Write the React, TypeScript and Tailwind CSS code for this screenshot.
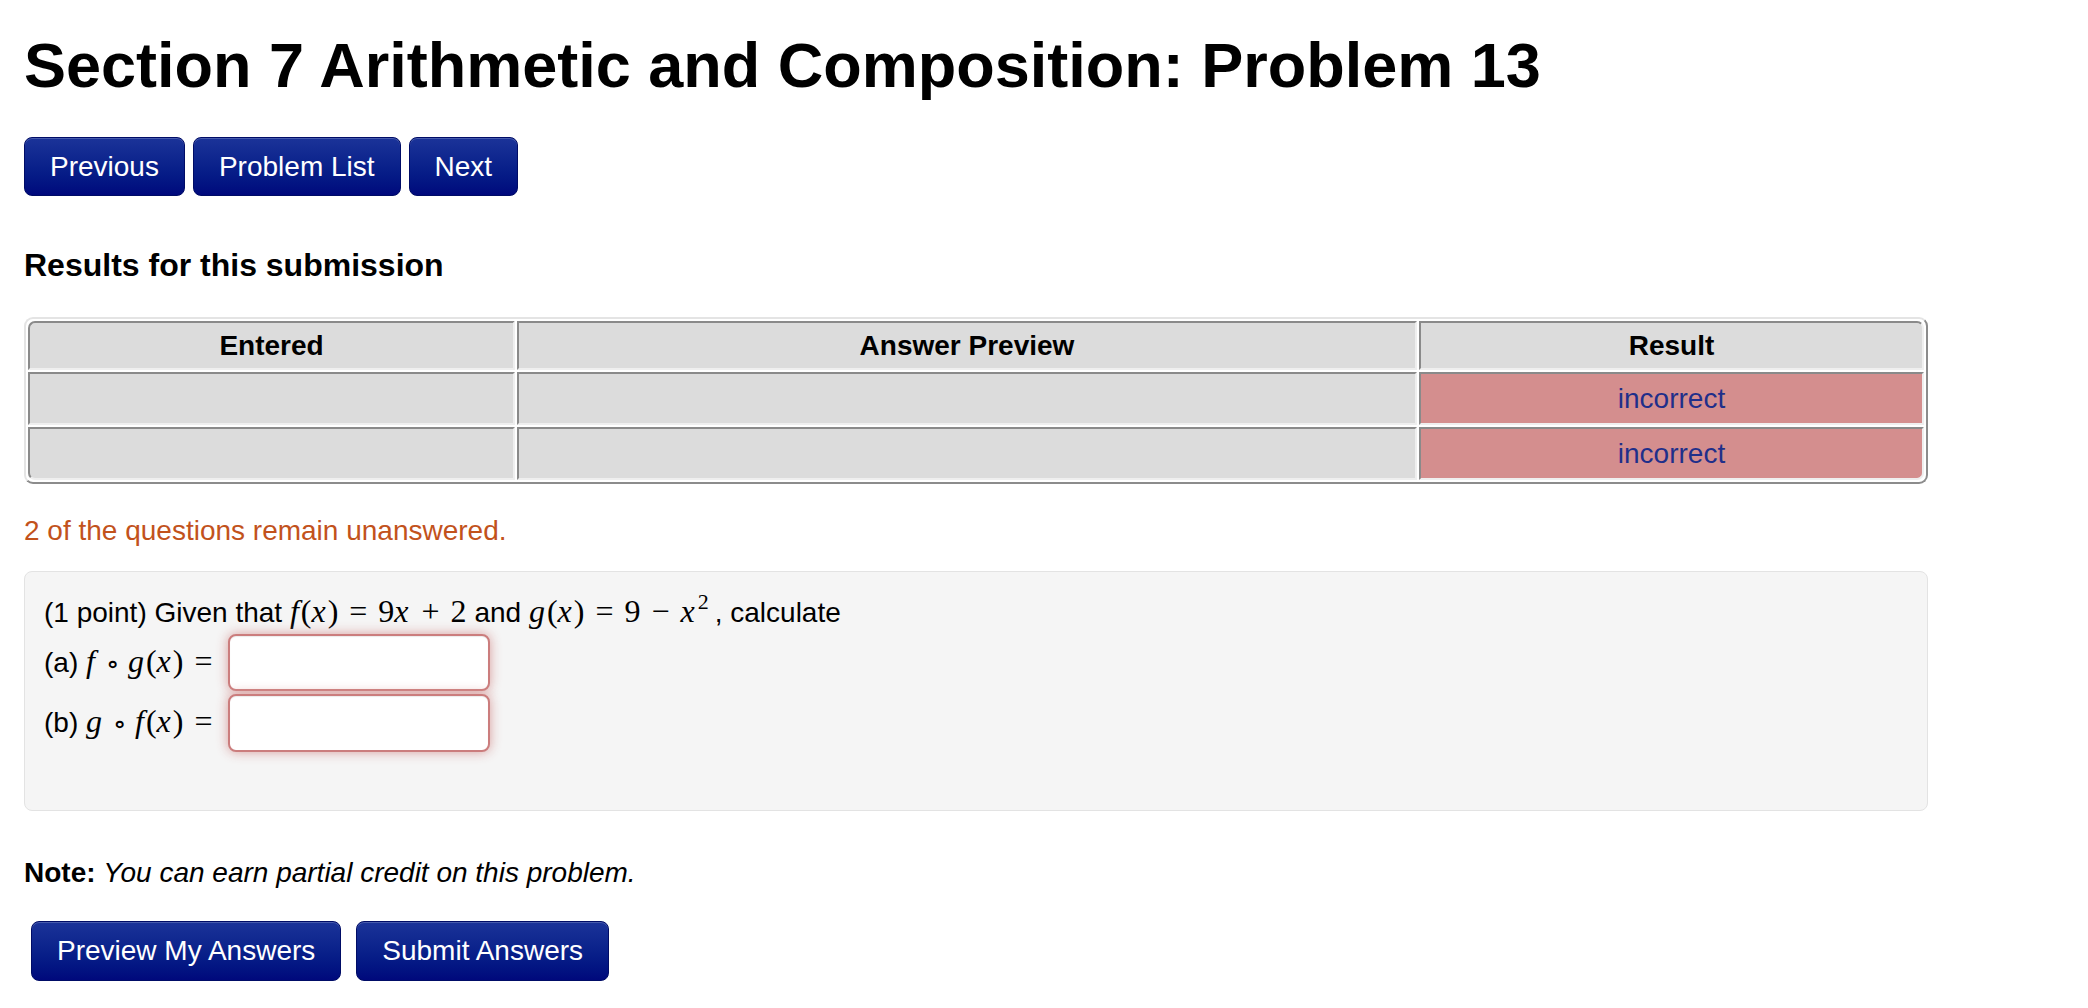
import React from "react";

const btnClass =
  "px-[25px] rounded-[8px] border border-[#000c66] bg-linear-to-b from-[#1b3399] to-[#00087c] text-white text-[28px] leading-none shadow-[inset_0_1px_0_rgba(255,255,255,0.2)]";

function NavButton({ label }: { label: string }) {
  return <button className={`h-[59px] ${btnClass}`}>{label}</button>;
}

function Mi({ children }: { children: React.ReactNode }) {
  return <span className="italic pr-[2px]">{children}</span>;
}

function Op({ children }: { children: React.ReactNode }) {
  return <span className="mx-[11px]">{children}</span>;
}

function Math({ children }: { children: React.ReactNode }) {
  return (
    <span className="font-['Liberation_Serif','DejaVu_Serif',serif] text-[32px] leading-none">
      {children}
    </span>
  );
}

function Compose() {
  return <span className="mx-[8px] font-['DejaVu_Sans',sans-serif] text-[24px] font-bold">∘</span>;
}

function AnswerInput() {
  return (
    <input
      type="text"
      className="h-full w-[262px] rounded-[8px] border-2 border-[#cb7d7d] bg-white shadow-[inset_0_1px_1px_rgba(0,0,0,0.08),0_0_12px_rgba(213,147,146,0.9)] outline-none"
    />
  );
}

export default function App() {
  const cellBorder = "border-2 border-t-[#8a8a8a] border-l-[#8a8a8a] border-b-[#efefef] border-r-[#efefef]";

  return (
    <div className="min-h-screen bg-white pl-[24px] font-['Liberation_Sans',Arial,sans-serif] text-[28px] text-black">
      <h1 className="pt-[30px] text-[63px] font-bold leading-[70px]">
        Section 7 Arithmetic and Composition: Problem 13
      </h1>

      <div className="mt-[37px] flex gap-[8px]">
        <NavButton label="Previous" />
        <NavButton label="Problem List" />
        <NavButton label="Next" />
      </div>

      <h3 className="mt-[51px] text-[32px] font-bold leading-[37px]">Results for this submission</h3>

      {/* Results table */}
      <table className="mt-[33px] w-[1904px] table-fixed border-separate border-spacing-[2px] rounded-[9px] border-2 border-t-[#e4e4e4] border-l-[#e4e4e4] border-b-[#8c8c8c] border-r-[#8c8c8c] text-center">
        <colgroup>
          <col className="w-[487px]" />
          <col className="w-[900px]" />
          <col />
        </colgroup>
        <thead>
          <tr className="h-[49px]">
            <th className={`${cellBorder} rounded-tl-[7px] bg-[#dcdcdc] font-bold`}>Entered</th>
            <th className={`${cellBorder} bg-[#dcdcdc] font-bold`}>Answer Preview</th>
            <th className={`${cellBorder} rounded-tr-[7px] bg-[#dcdcdc] font-bold`}>Result</th>
          </tr>
        </thead>
        <tbody>
          <tr className="h-[53px]">
            <td className={`${cellBorder} bg-[#dcdcdc]`}></td>
            <td className={`${cellBorder} bg-[#dcdcdc]`}></td>
            <td className={`${cellBorder} bg-[#d48e8e] text-[#1f2f8a]`}>incorrect</td>
          </tr>
          <tr className="h-[53px]">
            <td className={`${cellBorder} rounded-bl-[7px] bg-[#dcdcdc]`}></td>
            <td className={`${cellBorder} bg-[#dcdcdc]`}></td>
            <td className={`${cellBorder} rounded-br-[7px] bg-[#d48e8e] text-[#1f2f8a]`}>incorrect</td>
          </tr>
        </tbody>
      </table>

      <p className="mt-[31px] leading-[32px] text-[#c2521c]">2 of the questions remain unanswered.</p>

      {/* Problem body */}
      <div className="mt-[24px] w-[1904px] rounded-[8px] border border-[#e3e3e3] bg-[#f5f5f5] pl-[19px] pt-[21px] pb-[58px]">
        <p className="leading-[40px]">
          (1 point) Given that{" "}
          <Math>
            <Mi>f</Mi>(<Mi>x</Mi>)<Op>=</Op>9<Mi>x</Mi>
            <Op>+</Op>2
          </Math>{" "}
          and{" "}
          <Math>
            <Mi>g</Mi>(<Mi>x</Mi>)<Op>=</Op>9<Op>−</Op>
            <Mi>x</Mi>
            <sup className="relative -top-[13px] ml-[1px] mr-[6px] text-[22px] not-italic">2</sup>
          </Math>
          , calculate
        </p>
        <div className="mt-[1px] flex flex-col gap-[3px]">
          <div className="flex h-[57px] items-center">
            <span>
              (a){" "}
              <Math>
                <Mi>f</Mi>
                <Compose />
                <Mi>g</Mi>(<Mi>x</Mi>)<span className="ml-[11px]">=</span>
              </Math>
            </span>
            <span className="ml-[15px] h-full">
              <AnswerInput />
            </span>
          </div>
          <div className="flex h-[58px] items-center">
            <span>
              (b){" "}
              <Math>
                <Mi>g</Mi>
                <Compose />
                <Mi>f</Mi>(<Mi>x</Mi>)<span className="ml-[11px]">=</span>
              </Math>
            </span>
            <span className="ml-[15px] h-full">
              <AnswerInput />
            </span>
          </div>
        </div>
      </div>

      <p className="mt-[46px] leading-[32px]">
        <span className="font-bold">Note:</span> <i>You can earn partial credit on this problem.</i>
      </p>

      <div className="ml-[7px] mt-[32px] flex gap-[15px] pb-[27px]">
        <button className={`h-[60px] ${btnClass}`}>Preview My Answers</button>
        <button className={`h-[60px] ${btnClass}`}>Submit Answers</button>
      </div>
    </div>
  );
}
